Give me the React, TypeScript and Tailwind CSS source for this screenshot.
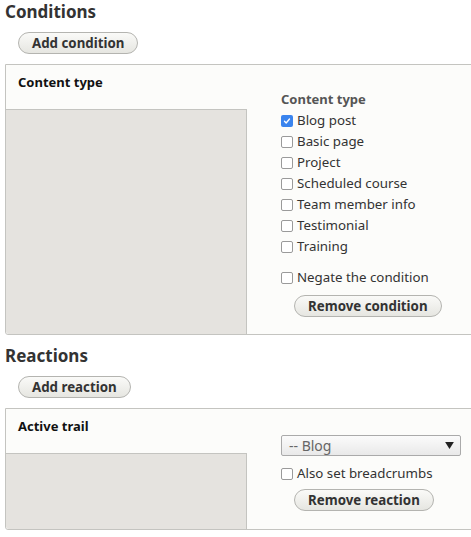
import React from "react";

type Option = { label: string; checked?: boolean };

const contentTypes: Option[] = [
  { label: "Blog post", checked: true },
  { label: "Basic page" },
  { label: "Project" },
  { label: "Scheduled course" },
  { label: "Team member info" },
  { label: "Testimonial" },
  { label: "Training" },
];

const PillButton = ({ children, className = "" }: { children: React.ReactNode; className?: string }) => (
  <button
    type="button"
    className={`h-[22px] rounded-full border border-[#b4b4b0] bg-gradient-to-b from-[#fafaf8] to-[#e6e6e1] px-[13px] text-[13.3px] font-bold leading-[20px] text-[#333] ${className}`}
  >
    {children}
  </button>
);

const Checkbox = ({ label, checked }: Option) => (
  <label className="flex h-[21px] items-center gap-[4px] text-[13.3px] text-[#333]">
    {checked ? (
      <span className="flex h-[12px] w-[12px] items-center justify-center rounded-[2px] bg-[#3a84ee]">
        <svg viewBox="0 0 12 12" className="h-[10px] w-[10px]">
          <path d="M3 6.3l2 2.1 4-4.8" fill="none" stroke="#fff" strokeWidth="1.6" strokeLinecap="round" strokeLinejoin="round" />
        </svg>
      </span>
    ) : (
      <span className="h-[12px] w-[12px] rounded-[2px] border border-[#9a9a9a] bg-white" />
    )}
    <span>{label}</span>
  </label>
);

const VerticalTabs = ({ tab, height, children }: { tab: string; height: string; children: React.ReactNode }) => (
  <div className={`ml-[5px] flex w-[480px] rounded-bl-[3px] border border-[#c4c4c0] ${height}`}>
    <div className="flex w-[241px] flex-col">
      <div className="h-[45px] border-b border-[#c4c4c0] bg-[#fcfcfa] pl-[12px] pt-[8px] text-[13px] font-bold text-[#111]">
        {tab}
      </div>
      <div className="flex-1 rounded-bl-[3px] border-r border-[#c4c4c0] bg-[#e5e3df]" />
    </div>
    <div className="flex-1 bg-[#fcfcfa] pl-[34px]">{children}</div>
  </div>
);

export default function App() {
  return (
    <div className="w-[471px] overflow-hidden bg-white pb-[6px]" style={{ fontFamily: '"Noto Sans", "DejaVu Sans", sans-serif' }}>
      <h2 className="ml-[5px] pt-[1px] text-[17px] font-bold leading-[22px] text-[#333]">Conditions</h2>
      <PillButton className="ml-[18px] mt-[9px]">Add condition</PillButton>
      <div className="mt-[10px]">
        <VerticalTabs tab="Content type" height="h-[271px]">
          <div className="pt-[24px]">
            <div className="mb-[1px] text-[13px] font-bold leading-[20px] text-[#555]">Content type</div>
            {contentTypes.map((o) => (
              <Checkbox key={o.label} {...o} />
            ))}
            <div className="mt-[10px]">
              <Checkbox label="Negate the condition" />
            </div>
            <PillButton className="ml-[13px] mt-[7px]">Remove condition</PillButton>
          </div>
        </VerticalTabs>
      </div>
      <h2 className="ml-[5px] mt-[10px] text-[17px] font-bold leading-[22px] text-[#333]">Reactions</h2>
      <PillButton className="ml-[18px] mt-[9px]">Add reaction</PillButton>
      <div className="mt-[10px]">
        <VerticalTabs tab="Active trail" height="h-[122px]">
          <div className="pt-[26px]">
            <div className="flex h-[21px] w-[180px] items-center justify-between rounded-[2px] border border-[#aaa] bg-gradient-to-b from-[#fbfbfb] to-[#e9e9e9] pl-[7px] pr-[6px] text-[14px] text-[#666]">
              <span>-- Blog</span>
              <svg viewBox="0 0 10 8" className="h-[7px] w-[9px]">
                <path d="M0 0h10L5 8z" fill="#222" />
              </svg>
            </div>
            <div className="mt-[7px]">
              <Checkbox label="Also set breadcrumbs" />
            </div>
            <PillButton className="ml-[13px] mt-[5px]">Remove reaction</PillButton>
          </div>
        </VerticalTabs>
      </div>
    </div>
  );
}
